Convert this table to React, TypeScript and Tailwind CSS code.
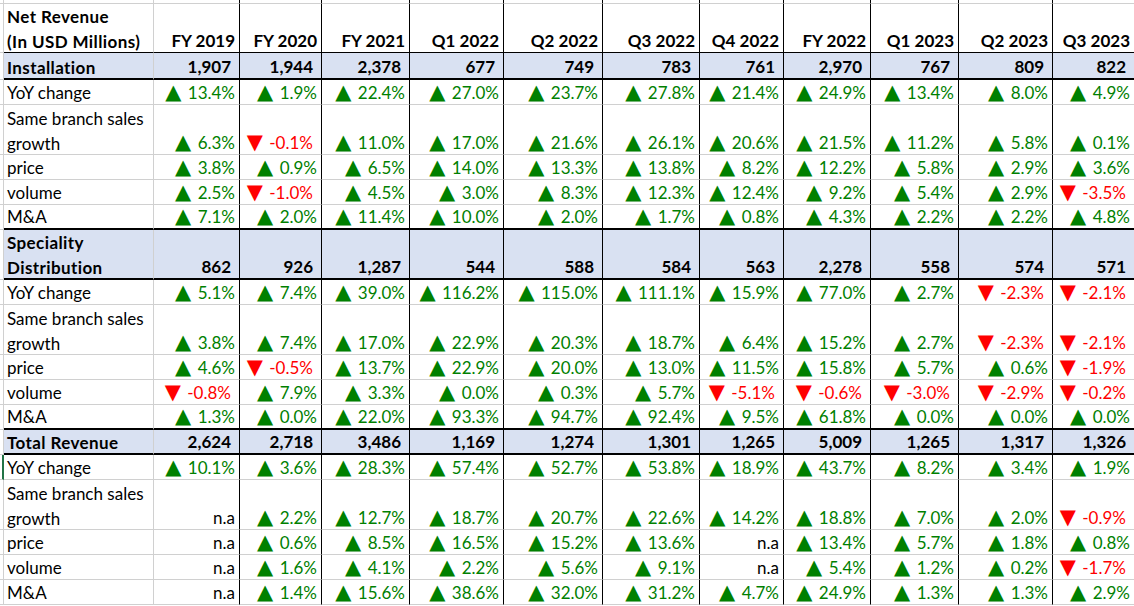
const GRID =
  "grid grid-cols-[4px_150px_86px_82px_88px_94px_99px_97px_84px_87px_88px_94px_82px]";

const headers = [
  "FY 2019",
  "FY 2020",
  "FY 2021",
  "Q1 2022",
  "Q2 2022",
  "Q3 2022",
  "Q4 2022",
  "FY 2022",
  "Q1 2023",
  "Q2 2023",
  "Q3 2023",
];

type Pct = number | null;

type Section = {
  name: string[];
  totals: string[];
  rows: { label: string; values: Pct[] }[];
};

const sections: Section[] = [
  {
    name: ["Installation"],
    totals: ["1,907", "1,944", "2,378", "677", "749", "783", "761", "2,970", "767", "809", "822"],
    rows: [
      { label: "YoY change", values: [13.4, 1.9, 22.4, 27.0, 23.7, 27.8, 21.4, 24.9, 13.4, 8.0, 4.9] },
      { label: "Same branch sales growth", values: [6.3, -0.1, 11.0, 17.0, 21.6, 26.1, 20.6, 21.5, 11.2, 5.8, 0.1] },
      { label: "price", values: [3.8, 0.9, 6.5, 14.0, 13.3, 13.8, 8.2, 12.2, 5.8, 2.9, 3.6] },
      { label: "volume", values: [2.5, -1.0, 4.5, 3.0, 8.3, 12.3, 12.4, 9.2, 5.4, 2.9, -3.5] },
      { label: "M&A", values: [7.1, 2.0, 11.4, 10.0, 2.0, 1.7, 0.8, 4.3, 2.2, 2.2, 4.8] },
    ],
  },
  {
    name: ["Speciality", "Distribution"],
    totals: ["862", "926", "1,287", "544", "588", "584", "563", "2,278", "558", "574", "571"],
    rows: [
      { label: "YoY change", values: [5.1, 7.4, 39.0, 116.2, 115.0, 111.1, 15.9, 77.0, 2.7, -2.3, -2.1] },
      { label: "Same branch sales growth", values: [3.8, 7.4, 17.0, 22.9, 20.3, 18.7, 6.4, 15.2, 2.7, -2.3, -2.1] },
      { label: "price", values: [4.6, -0.5, 13.7, 22.9, 20.0, 13.0, 11.5, 15.8, 5.7, 0.6, -1.9] },
      { label: "volume", values: [-0.8, 7.9, 3.3, 0.0, 0.3, 5.7, -5.1, -0.6, -3.0, -2.9, -0.2] },
      { label: "M&A", values: [1.3, 0.0, 22.0, 93.3, 94.7, 92.4, 9.5, 61.8, 0.0, 0.0, 0.0] },
    ],
  },
  {
    name: ["Total Revenue"],
    totals: ["2,624", "2,718", "3,486", "1,169", "1,274", "1,301", "1,265", "5,009", "1,265", "1,317", "1,326"],
    rows: [
      { label: "YoY change", values: [10.1, 3.6, 28.3, 57.4, 52.7, 53.8, 18.9, 43.7, 8.2, 3.4, 1.9] },
      { label: "Same branch sales growth", values: [null, 2.2, 12.7, 18.7, 20.7, 22.6, 14.2, 18.8, 7.0, 2.0, -0.9] },
      { label: "price", values: [null, 0.6, 8.5, 16.5, 15.2, 13.6, null, 13.4, 5.7, 1.8, 0.8] },
      { label: "volume", values: [null, 1.6, 4.1, 2.2, 5.6, 9.1, null, 5.4, 1.2, 0.2, -1.7] },
      { label: "M&A", values: [null, 1.4, 15.6, 38.6, 32.0, 31.2, 4.7, 24.9, 1.3, 1.3, 2.9] },
    ],
  },
];

function PctText({ v }: { v: Pct }) {
  if (v === null) return <span className="pr-[4px] leading-[22px]">n.a</span>;
  if (v < 0)
    return (
      <span className="pr-[8px] leading-[22px] whitespace-nowrap text-[#ff0000]">
        <span className="font-['DejaVu_Sans'] text-[21px] mr-[2px]">▼</span> {v.toFixed(1)}%
      </span>
    );
  return (
    <span className="pr-[4px] leading-[22px] whitespace-nowrap text-[#008000]">
      <span className="font-['DejaVu_Sans'] text-[21px] mr-[2px]">▲</span> {v.toFixed(1)}%
    </span>
  );
}

type RowProps = {
  h: string;
  bottom: string;
  bg?: string;
  strip?: string;
  label: React.ReactNode;
  cells: React.ReactNode[];
};

function Row({ h, bottom, bg = "", strip = "border-r-[#d0d0d0]", label, cells }: RowProps) {
  return (
    <>
      <div className={`${h} border-b border-b-[#d0d0d0] border-r ${strip}`} />
      <div className={`${h} ${bottom} ${bg} border-r border-r-[#d0d0d0] flex items-end pl-[3px]`}>
        {label}
      </div>
      {cells.map((c, i) => (
        <div key={i} className={`${h} ${bottom} ${bg} border-r border-r-black flex items-end justify-end`}>
          {c}
        </div>
      ))}
    </>
  );
}

export default function App() {
  return (
    <div className="w-[1134px] h-[606px] overflow-hidden bg-white text-black text-[17px] font-['Lato',sans-serif]">
      <div className={GRID}>
        {/* cut-off row above the header */}
        <Row
          h="h-[4px]"
          bottom="border-b border-b-[#d0d0d0]"
          label={null}
          cells={headers.map(() => null)}
        />
        <div className="h-[49px] border-b border-b-[#d0d0d0] border-r border-r-[#d0d0d0]" />
        <div className="h-[49px] border-b border-b-black border-r border-r-[#d0d0d0] flex items-end pl-[3px]">
          <span className="font-bold tracking-[0.4px] leading-[25px] -mb-[2px]">
            Net Revenue
            <br />
            (In USD Millions)
          </span>
        </div>
        {headers.map((hd) => (
          <div key={hd} className="h-[49px] border-b border-b-black border-r border-r-black flex items-end justify-end">
            <span className="font-bold leading-[22px] pr-[4px] whitespace-nowrap">{hd}</span>
          </div>
        ))}

        {sections.map((s, si) => (
          <Section key={s.name.join()} s={s} index={si} />
        ))}
      </div>
    </div>
  );
}

function Section({ s, index }: { s: Section; index: number }) {
  const last = index === sections.length - 1;
  const sectionH = s.name.length > 1 ? "h-[50px]" : index === 0 ? "h-[27px]" : "h-[25px]";
  return (
    <>
      <Row
        h={sectionH}
        bottom="border-b-2 border-b-black"
        bg="bg-[#d9e1f2]"
        label={
          <span className="font-bold tracking-[0.4px] leading-[25px] -mb-[2px]">
            {s.name.map((n, i) => (
              <span key={n}>
                {i > 0 && <br />}
                {n}
              </span>
            ))}
          </span>
        }
        cells={s.totals.map((t) => (
          <span className="font-bold leading-[22px] pr-[8px]">{t}</span>
        ))}
      />
      {s.rows.map((r, ri) => {
        const tall = r.label.startsWith("Same");
        const beforeNext = ri === s.rows.length - 1 && !last;
        return (
          <Row
            key={r.label}
            h={tall ? "h-[50px]" : "h-[25px]"}
            bottom={beforeNext ? "border-b-2 border-b-black" : "border-b border-b-[#d0d0d0]"}
            strip={last && ri === 0 ? "border-r-2 border-r-[#217346]" : "border-r-[#d0d0d0]"}
            label={
              tall ? (
                <span className="leading-[25px] -mb-[2px]">
                  Same branch sales
                  <br />
                  growth
                </span>
              ) : (
                <span className="leading-[22px]">{r.label}</span>
              )
            }
            cells={r.values.map((v) => (
              <PctText v={v} />
            ))}
          />
        );
      })}
    </>
  );
}
